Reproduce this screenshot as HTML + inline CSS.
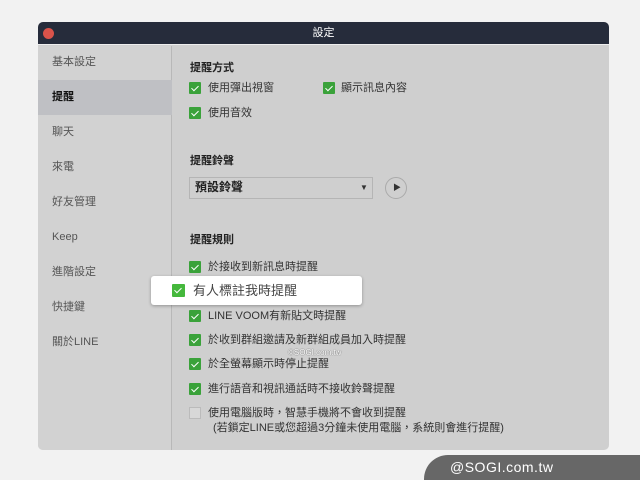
<!DOCTYPE html><html><head><meta charset="utf-8"><style>
*{margin:0;padding:0;box-sizing:border-box}
html,body{width:640px;height:480px}
body{background:#f2f2f2;position:relative;overflow:hidden;font-family:"Liberation Sans","Noto Sans CJK TC",sans-serif;color:#333}
.win{position:absolute;left:38px;top:22px;width:571px;height:428px;background:#cfcfcf;border-radius:5px;overflow:hidden}
.title{height:23px;background:#262c3b;color:#fff;font-size:11px;text-align:center;line-height:22px;border-bottom:1px solid #eee}
.dot{position:absolute;left:5px;top:6px;width:11px;height:11px;border-radius:50%;background:#d9534a}
.side{position:absolute;left:0;top:24px;width:134px;bottom:0;background:#d2d2d2;border-right:1px solid #b8b8b8}
.si{position:absolute;left:14px;font-size:11px;color:#555;line-height:14px}
.sel{position:absolute;left:0;top:34px;width:134px;height:35px;background:#bfc0c4}
.t{position:absolute;font-size:11px;color:#333;white-space:nowrap;line-height:14px}
.h{font-weight:bold;color:#222}
.cb{position:absolute;width:12px;height:12px;background:#3aa23a;border-radius:1px}
.cb::after{content:"";position:absolute;left:3.5px;top:1.5px;width:3px;height:6px;border:solid #fff;border-width:0 1.5px 1.5px 0;transform:rotate(45deg)}
</style></head><body>
<div class="win">
<div class="title">設定</div><div class="dot"></div>
<div class="side">
<div class="sel"></div>
<div class="si" style="top:9px">基本設定</div>
<div class="si" style="top:44px;font-weight:bold;color:#111">提醒</div>
<div class="si" style="top:79px">聊天</div>
<div class="si" style="top:114px">來電</div>
<div class="si" style="top:149px">好友管理</div>
<div class="si" style="top:184px">Keep</div>
<div class="si" style="top:219px">進階設定</div>
<div class="si" style="top:254px">快捷鍵</div>
<div class="si" style="top:289px">關於LINE</div>
</div>
<div class="t h" style="left:152px;top:39px">提醒方式</div>
<div class="cb" style="left:151px;top:60px"></div><div class="t" style="left:170px;top:59px">使用彈出視窗</div>
<div class="cb" style="left:285px;top:60px"></div><div class="t" style="left:303px;top:59px">顯示訊息內容</div>
<div class="cb" style="left:151px;top:85px"></div><div class="t" style="left:170px;top:84px">使用音效</div>
<div class="t h" style="left:152px;top:132px">提醒鈴聲</div>
<div style="position:absolute;left:151px;top:155px;width:184px;height:22px;border:1px solid #b5b5b5;"></div>
<div class="t h" style="left:157px;top:158px;font-size:12px">預設鈴聲</div>
<div class="t" style="left:322px;top:159px;font-size:8px">▼</div>
<div style="position:absolute;left:347px;top:155px;width:22px;height:22px;border:1px solid #aaa;border-radius:50%"></div>
<div class="t" style="left:355px;top:159px;font-size:8px">▶</div>
<div class="t h" style="left:152px;top:211px">提醒規則</div>
<div class="cb" style="left:151px;top:239px"></div><div class="t" style="left:170px;top:238px">於接收到新訊息時提醒</div>
<div class="cb" style="left:151px;top:288px"></div><div class="t" style="left:170px;top:287px">LINE VOOM有新貼文時提醒</div>
<div class="cb" style="left:151px;top:312px"></div><div class="t" style="left:170px;top:311px">於收到群組邀請及新群組成員加入時提醒</div>
<div class="cb" style="left:151px;top:336px"></div><div class="t" style="left:170px;top:335px">於全螢幕顯示時停止提醒</div>
<div class="cb" style="left:151px;top:361px"></div><div class="t" style="left:170px;top:360px">進行語音和視訊通話時不接收鈴聲提醒</div>
<div style="position:absolute;left:151px;top:385px;width:12px;height:12px;border:1px solid #bbb;background:#d8d8d8"></div>
<div class="t" style="left:170px;top:384px">使用電腦版時，智慧手機將不會收到提醒</div>
<div class="t" style="left:175px;top:399px">(若鎖定LINE或您超過3分鐘未使用電腦，系統則會進行提醒)</div>
</div>
<div style="position:absolute;left:151px;top:276px;width:211px;height:29px;background:#fff;border-radius:3px;box-shadow:0 1px 3px rgba(0,0,0,.3)"></div>
<div class="cb" style="left:172px;top:284px;width:13px;height:13px;background:#45b83c"></div>
<div class="t" style="left:193px;top:282px;font-size:13px;line-height:17px;color:#444">有人標註我時提醒</div>
<div class="t" style="left:288px;top:346px;font-size:8px;color:#fff;text-shadow:0 0 1px #333">©SOGI.com.tw</div>
<div style="position:absolute;left:424px;top:455px;width:216px;height:25px;background:#676767;border-top-left-radius:24px"></div>
<div class="t" style="left:450px;top:459px;font-size:14px;line-height:17px;color:#fff;letter-spacing:.5px">@SOGI.com.tw</div>
</body></html>
